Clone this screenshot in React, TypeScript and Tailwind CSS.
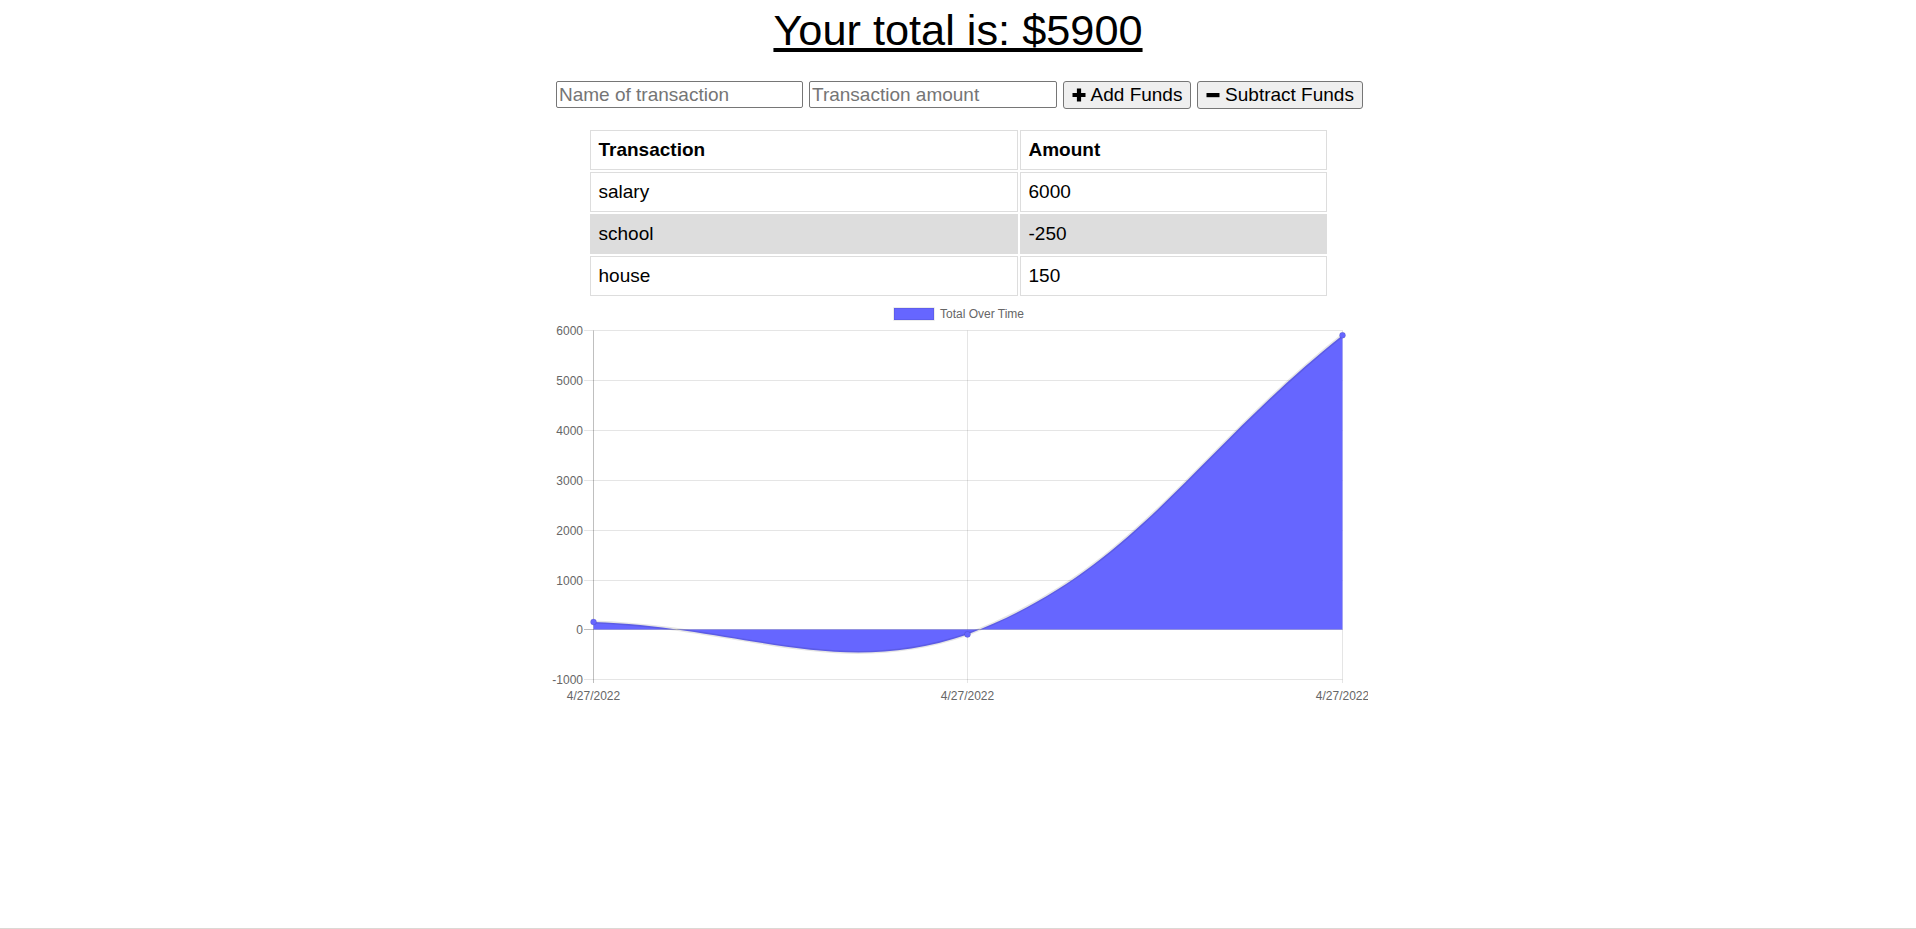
import React from 'react'

type Row = { name: string; amount: number }

const rows: Row[] = [
  { name: 'salary', amount: 6000 },
  { name: 'school', amount: -250 },
  { name: 'house', amount: 150 },
]

// chart geometry, in svg coordinates (svg is 820 x 410)
const left = 45.5
const mid = 419.5
const right = 794.5
const yFor = (v: number) => 331.4 - v * 0.04985

const PlusIcon = () => (
  <svg width="14" height="14" viewBox="0 0 14 14" className="shrink-0">
    <path d="M4.9 0.5h4.2v4.4h4.4v4.2H9.1v4.4H4.9V9.1H0.5V4.9h4.4z" fill="#000" />
  </svg>
)

const MinusIcon = () => (
  <svg width="14" height="14" viewBox="0 0 14 14" className="shrink-0">
    <rect x="0.5" y="5" width="13" height="4.2" fill="#000" />
  </svg>
)

const TotalChart = () => {
  const ticks = [6000, 5000, 4000, 3000, 2000, 1000, 0, -1000]
  const p0 = { x: left, y: yFor(150) }
  const p1 = { x: mid, y: yFor(-100) }
  const p2 = { x: right, y: yFor(5900) }
  const curve = `M${p0.x},${p0.y} C195,328.9 288.1,381.3 ${p1.x},${p1.y} C587.7,272 644.3,156.9 ${p2.x},${p2.y}`
  const area = `${curve} L${p2.x},${yFor(0)} L${p0.x},${yFor(0)} Z`

  return (
    <svg width="820" height="410" className="mx-auto block" style={{ fontFamily: '"Liberation Sans", Arial, sans-serif' }}>
      {/* legend */}
      <rect x="346" y="10" width="40" height="12" fill="#6666ff" stroke="rgba(0,0,0,0.1)" strokeWidth="1.5" />
      <text x="392" y="20" fontSize="12" fill="#666">Total Over Time</text>

      {/* horizontal grid lines + y ticks */}
      {ticks.map((t) => {
        const y = Math.round(yFor(t)) + 0.5
        return (
          <g key={t}>
            <line x1="36" x2={right} y1={y} y2={y} stroke={t === 0 ? 'rgba(0,0,0,0.25)' : 'rgba(0,0,0,0.1)'} strokeWidth="1" />
            <text x="35" y={y + 4} fontSize="12" fill="#666" textAnchor="end">
              {t}
            </text>
          </g>
        )
      })}

      {/* vertical grid lines */}
      {[left, mid, right].map((x, i) => (
        <g key={i}>
          <line x1={x} x2={x} y1="32.5" y2="385" stroke={i === 0 ? 'rgba(0,0,0,0.25)' : 'rgba(0,0,0,0.1)'} strokeWidth="1" />
          <text x={x} y="402" fontSize="12" fill="#666" textAnchor="middle">
            4/27/2022
          </text>
        </g>
      ))}

      {/* data */}
      <path d={area} fill="#6666ff" />
      <path d={curve} fill="none" stroke="rgba(0,0,0,0.1)" strokeWidth="3" />
      {[p0, p1, p2].map((p, i) => (
        <circle key={i} cx={p.x} cy={p.y} r="3" fill="#6666ff" stroke="rgba(0,0,0,0.1)" strokeWidth="1" />
      ))}
    </svg>
  )
}

const App = () => {
  return (
    <div className="h-[929px] overflow-hidden border-b border-[#dcd8d4] bg-white font-['Liberation_Sans',Arial,sans-serif] text-black">
      <h1 className="mt-[6px] text-center text-[43.3px] leading-[49px] font-normal underline">
        Your total is: $5900
      </h1>

      <form className="mt-[26px] flex justify-center gap-[6px] pl-[3px]" onSubmit={(e) => e.preventDefault()}>
        <input
          type="text"
          placeholder="Name of transaction"
          className="h-[27px] w-[247px] rounded-[2px] border border-[#767676] px-[2px] pt-[1px] text-[19px] placeholder:text-[#757575]"
        />
        <input
          type="number"
          placeholder="Transaction amount"
          className="h-[27px] w-[248px] rounded-[2px] border border-[#767676] px-[2px] pt-[1px] text-[19px] placeholder:text-[#757575]"
        />
        <button
          type="button"
          className="flex h-[28px] w-[128px] items-center justify-center gap-[5px] rounded-[3px] border border-[#767676] bg-[#efefef] text-[19px]"
        >
          <PlusIcon />
          <span>Add Funds</span>
        </button>
        <button
          type="button"
          className="flex h-[28px] w-[166px] items-center justify-center gap-[5px] rounded-[3px] border border-[#767676] bg-[#efefef] text-[19px]"
        >
          <MinusIcon />
          <span>Subtract Funds</span>
        </button>
      </form>

      <table className="mx-auto mt-[19px] w-[741px] table-fixed border-separate border-spacing-[2px] text-[19px]">
        <thead>
          <tr>
            <th className="w-[428px] border border-[#dddddd] px-[8px] py-[6px] text-left leading-[26px] font-bold">
              Transaction
            </th>
            <th className="w-[307px] border border-[#dddddd] px-[8px] py-[6px] text-left leading-[26px] font-bold">
              Amount
            </th>
          </tr>
        </thead>
        <tbody>
          {rows.map((row, i) => (
            <tr key={row.name} className={i % 2 === 1 ? 'bg-[#dddddd]' : ''}>
              <td className="border border-[#dddddd] px-[8px] py-[6px] leading-[26px]">{row.name}</td>
              <td className="border border-[#dddddd] px-[8px] py-[6px] leading-[26px]">{row.amount}</td>
            </tr>
          ))}
        </tbody>
      </table>

      <TotalChart />
    </div>
  )
}

export default App
